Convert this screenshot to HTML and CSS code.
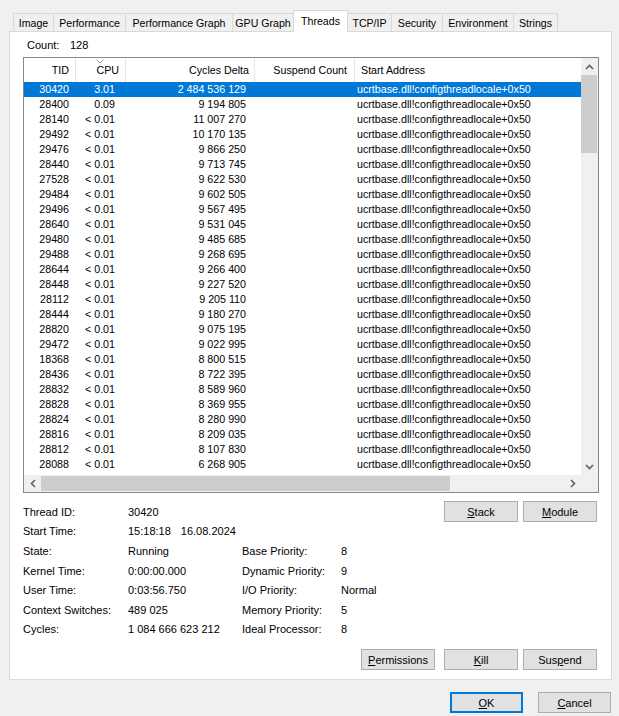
FILE: index.html
```html
<!DOCTYPE html>
<html>
<head>
<meta charset="utf-8">
<link rel="stylesheet" href="styles.css">
</head>
<body>
<div class="window">
  <div class="tabs">
    <div class="tab w-image">Image</div>
    <div class="tab w-perf">Performance</div>
    <div class="tab w-pgraph">Performance Graph</div>
    <div class="tab w-gpu">GPU Graph</div>
    <div class="tab active w-threads">Threads</div>
    <div class="tab w-tcp">TCP/IP</div>
    <div class="tab w-sec">Security</div>
    <div class="tab w-env">Environment</div>
    <div class="tab w-str">Strings</div>
  </div>
  <div class="panel">
    <div class="count"><span class="count-label">Count:</span><span>128</span></div>
    <div class="list">
      <div class="list-main">
        <div class="viewport">
          <div class="hdr">
            <div class="hc">TID</div>
            <div class="hc hc-cpu">CPU<svg class="sort" width="8" height="5" viewBox="0 0 8 5"><polyline points="0.5,0.5 4,4 7.5,0.5" fill="none" stroke="#9a9a9a" stroke-width="1"/></svg></div>
            <div class="hc hc-cyc">Cycles Delta</div>
            <div class="hc hc-sus">Suspend Count</div>
            <div class="hc hc-addr">Start Address</div>
          </div>
          <div class="row sel"><span class="c-tid">30420</span><span class="c-cpu">3.01</span><span class="c-cyc">2 484 536 129</span><span></span><span class="c-addr">ucrtbase.dll!configthreadlocale+0x50</span></div>
          <div class="row"><span class="c-tid">28400</span><span class="c-cpu">0.09</span><span class="c-cyc">9 194 805</span><span></span><span class="c-addr">ucrtbase.dll!configthreadlocale+0x50</span></div>
          <div class="row"><span class="c-tid">28140</span><span class="c-cpu">&lt; 0.01</span><span class="c-cyc">11 007 270</span><span></span><span class="c-addr">ucrtbase.dll!configthreadlocale+0x50</span></div>
          <div class="row"><span class="c-tid">29492</span><span class="c-cpu">&lt; 0.01</span><span class="c-cyc">10 170 135</span><span></span><span class="c-addr">ucrtbase.dll!configthreadlocale+0x50</span></div>
          <div class="row"><span class="c-tid">29476</span><span class="c-cpu">&lt; 0.01</span><span class="c-cyc">9 866 250</span><span></span><span class="c-addr">ucrtbase.dll!configthreadlocale+0x50</span></div>
          <div class="row"><span class="c-tid">28440</span><span class="c-cpu">&lt; 0.01</span><span class="c-cyc">9 713 745</span><span></span><span class="c-addr">ucrtbase.dll!configthreadlocale+0x50</span></div>
          <div class="row"><span class="c-tid">27528</span><span class="c-cpu">&lt; 0.01</span><span class="c-cyc">9 622 530</span><span></span><span class="c-addr">ucrtbase.dll!configthreadlocale+0x50</span></div>
          <div class="row"><span class="c-tid">29484</span><span class="c-cpu">&lt; 0.01</span><span class="c-cyc">9 602 505</span><span></span><span class="c-addr">ucrtbase.dll!configthreadlocale+0x50</span></div>
          <div class="row"><span class="c-tid">29496</span><span class="c-cpu">&lt; 0.01</span><span class="c-cyc">9 567 495</span><span></span><span class="c-addr">ucrtbase.dll!configthreadlocale+0x50</span></div>
          <div class="row"><span class="c-tid">28640</span><span class="c-cpu">&lt; 0.01</span><span class="c-cyc">9 531 045</span><span></span><span class="c-addr">ucrtbase.dll!configthreadlocale+0x50</span></div>
          <div class="row"><span class="c-tid">29480</span><span class="c-cpu">&lt; 0.01</span><span class="c-cyc">9 485 685</span><span></span><span class="c-addr">ucrtbase.dll!configthreadlocale+0x50</span></div>
          <div class="row"><span class="c-tid">29488</span><span class="c-cpu">&lt; 0.01</span><span class="c-cyc">9 268 695</span><span></span><span class="c-addr">ucrtbase.dll!configthreadlocale+0x50</span></div>
          <div class="row"><span class="c-tid">28644</span><span class="c-cpu">&lt; 0.01</span><span class="c-cyc">9 266 400</span><span></span><span class="c-addr">ucrtbase.dll!configthreadlocale+0x50</span></div>
          <div class="row"><span class="c-tid">28448</span><span class="c-cpu">&lt; 0.01</span><span class="c-cyc">9 227 520</span><span></span><span class="c-addr">ucrtbase.dll!configthreadlocale+0x50</span></div>
          <div class="row"><span class="c-tid">28112</span><span class="c-cpu">&lt; 0.01</span><span class="c-cyc">9 205 110</span><span></span><span class="c-addr">ucrtbase.dll!configthreadlocale+0x50</span></div>
          <div class="row"><span class="c-tid">28444</span><span class="c-cpu">&lt; 0.01</span><span class="c-cyc">9 180 270</span><span></span><span class="c-addr">ucrtbase.dll!configthreadlocale+0x50</span></div>
          <div class="row"><span class="c-tid">28820</span><span class="c-cpu">&lt; 0.01</span><span class="c-cyc">9 075 195</span><span></span><span class="c-addr">ucrtbase.dll!configthreadlocale+0x50</span></div>
          <div class="row"><span class="c-tid">29472</span><span class="c-cpu">&lt; 0.01</span><span class="c-cyc">9 022 995</span><span></span><span class="c-addr">ucrtbase.dll!configthreadlocale+0x50</span></div>
          <div class="row"><span class="c-tid">18368</span><span class="c-cpu">&lt; 0.01</span><span class="c-cyc">8 800 515</span><span></span><span class="c-addr">ucrtbase.dll!configthreadlocale+0x50</span></div>
          <div class="row"><span class="c-tid">28436</span><span class="c-cpu">&lt; 0.01</span><span class="c-cyc">8 722 395</span><span></span><span class="c-addr">ucrtbase.dll!configthreadlocale+0x50</span></div>
          <div class="row"><span class="c-tid">28832</span><span class="c-cpu">&lt; 0.01</span><span class="c-cyc">8 589 960</span><span></span><span class="c-addr">ucrtbase.dll!configthreadlocale+0x50</span></div>
          <div class="row"><span class="c-tid">28828</span><span class="c-cpu">&lt; 0.01</span><span class="c-cyc">8 369 955</span><span></span><span class="c-addr">ucrtbase.dll!configthreadlocale+0x50</span></div>
          <div class="row"><span class="c-tid">28824</span><span class="c-cpu">&lt; 0.01</span><span class="c-cyc">8 280 990</span><span></span><span class="c-addr">ucrtbase.dll!configthreadlocale+0x50</span></div>
          <div class="row"><span class="c-tid">28816</span><span class="c-cpu">&lt; 0.01</span><span class="c-cyc">8 209 035</span><span></span><span class="c-addr">ucrtbase.dll!configthreadlocale+0x50</span></div>
          <div class="row"><span class="c-tid">28812</span><span class="c-cpu">&lt; 0.01</span><span class="c-cyc">8 107 830</span><span></span><span class="c-addr">ucrtbase.dll!configthreadlocale+0x50</span></div>
          <div class="row"><span class="c-tid">28088</span><span class="c-cpu">&lt; 0.01</span><span class="c-cyc">6 268 905</span><span></span><span class="c-addr">ucrtbase.dll!configthreadlocale+0x50</span></div>
          <div class="row"><span class="c-tid">28040</span><span class="c-cpu">&lt; 0.01</span><span class="c-cyc">4 781 125</span><span></span><span class="c-addr">ucrtbase.dll!configthreadlocale+0x50</span></div>
        </div>
        <div class="vscroll">
          <div class="arrow"><svg width="9" height="6" viewBox="0 0 9 6"><polyline points="1,5 4.5,1.5 8,5" fill="none" stroke="#606060" stroke-width="1.6"/></svg></div>
          <div class="vthumb"></div>
          <div class="vtrack"></div>
          <div class="arrow"><svg width="9" height="6" viewBox="0 0 9 6"><polyline points="1,1 4.5,4.5 8,1" fill="none" stroke="#606060" stroke-width="1.6"/></svg></div>
        </div>
      </div>
      <div class="list-bottom">
        <div class="hscroll">
          <div class="arrow"><svg width="6" height="9" viewBox="0 0 6 9"><polyline points="5,1 1.5,4.5 5,8" fill="none" stroke="#606060" stroke-width="1.6"/></svg></div>
          <div class="hthumb"></div>
          <div class="htrack"></div>
          <div class="arrow"><svg width="6" height="9" viewBox="0 0 6 9"><polyline points="1,1 4.5,4.5 1,8" fill="none" stroke="#606060" stroke-width="1.6"/></svg></div>
        </div>
        <div class="corner"></div>
      </div>
    </div>
    <div class="details">
      <div>Thread ID:</div><div>30420</div>
      <div class="top-buttons"><button class="btn"><u>S</u>tack</button><button class="btn"><u>M</u>odule</button></div>
      <div>Start Time:</div><div class="span3">15:18:18<span class="date">16.08.2024</span></div>
      <div>State:</div><div>Running</div><div>Base Priority:</div><div>8</div>
      <div>Kernel Time:</div><div>0:00:00.000</div><div>Dynamic Priority:</div><div>9</div>
      <div>User Time:</div><div>0:03:56.750</div><div>I/O Priority:</div><div>Normal</div>
      <div>Context Switches:</div><div>489 025</div><div>Memory Priority:</div><div>5</div>
      <div>Cycles:</div><div>1 084 666 623 212</div><div>Ideal Processor:</div><div>8</div>
    </div>
    <div class="bottom-buttons">
      <button class="btn btn-perm"><u>P</u>ermissions</button>
      <button class="btn"><u>K</u>ill</button>
      <button class="btn">Sus<u>p</u>end</button>
    </div>
  </div>
  <div class="footer">
    <button class="btn fbtn default"><u>O</u>K</button>
    <button class="btn fbtn"><u>C</u>ancel</button>
  </div>
</div>
</body>
</html>
```
FILE: styles.css
```css
* { box-sizing: border-box; }
html, body { margin: 0; padding: 0; }
body {
  background: #f0f0f0;
  font-family: "Liberation Sans", Arial, sans-serif;
  font-size: 11px;
  color: #000;
}
.window { width: 619px; height: 716px; }

.tabs {
  display: flex;
  align-items: flex-end;
  height: 31px;
  padding-top: 11px;
  padding-left: 13px;
  font-size: 10.6px;
}
.tab {
  height: 18px;
  line-height: 18px;
  text-align: center;
  border: 1px solid #d9d9d9;
  border-bottom: none;
  margin-right: -1px;
  background: #f0f0f0;
  white-space: nowrap;
}
.tab.active {
  position: relative;
  z-index: 1;
  height: 22px;
  line-height: 20px;
  margin-bottom: -1px;
  background: #fff;
}
.w-image { width: 41px; }
.w-perf { width: 73px; }
.w-pgraph { width: 108px; }
.w-gpu { width: 62px; }
.w-threads { width: 55px; }
.w-tcp { width: 45px; }
.w-sec { width: 52px; }
.w-env { width: 72px; }
.w-str { width: 45px; }

.panel {
  margin-left: 9px;
  width: 603px;
  height: 649px;
  background: #fff;
  border: 1px solid #d9d9d9;
  padding: 6px 14px 0 13px;
}
.count { height: 14px; line-height: 14px; padding-left: 4px; }
.count-label { display: inline-block; width: 43px; }

.list {
  margin-top: 5px;
  width: 576px;
  height: 436px;
  border: 1px solid #828790;
  display: flex;
  flex-direction: column;
  font-size: 10.7px;
}
.list-main { flex: 1; display: flex; min-height: 0; }
.viewport { flex: 1; overflow: hidden; }
.hdr {
  display: grid;
  grid-template-columns: 52px 50px 129px 100px 1fr;
  height: 24px;
  line-height: 24px;
}
.hc {
  text-align: right;
  padding-right: 6px;
  border-right: 1px solid #e5e5e5;
  white-space: nowrap;
}
.hc-cpu { position: relative; }
.sort { position: absolute; left: 20px; top: 1px; }
.hc-cyc { padding-right: 5px; }
.hc-sus { padding-right: 7px; }
.hc-addr { text-align: left; padding-left: 6px; border-right: none; }

.row {
  display: grid;
  grid-template-columns: 52px 50px 129px 100px 1fr;
  height: 15px;
  line-height: 15px;
  white-space: nowrap;
}
.row.sel { background: #0078d7; color: #fff; }
.c-tid { text-align: right; padding-right: 7px; }
.c-cpu { text-align: right; padding-right: 11px; }
.c-cyc { text-align: right; padding-right: 9px; }
.c-addr { padding-left: 2px; }

.vscroll {
  width: 17px;
  background: #f0f0f0;
  display: flex;
  flex-direction: column;
}
.arrow {
  width: 17px;
  height: 17px;
  display: flex;
  align-items: center;
  justify-content: center;
  flex: none;
}
.vthumb { height: 78px; margin: 0 1px 0 0; background: #cdcdcd; flex: none; }
.vtrack { flex: 1; }
.list-bottom { height: 17px; display: flex; }
.hscroll { flex: 1; display: flex; background: #f0f0f0; }
.hthumb { width: 409px; margin: 1px 0; background: #cdcdcd; flex: none; }
.htrack { flex: 1; }
.corner { width: 17px; background: #f0f0f0; }

.details {
  margin-top: 9px;
  display: grid;
  grid-template-columns: 105px 114px 99px 1fr;
  grid-auto-rows: 19.6px;
  align-items: center;
  white-space: nowrap;
}
.top-buttons {
  grid-column: 3 / 5;
  display: flex;
  justify-content: flex-end;
  gap: 5px;
}
.span3 { grid-column: 2 / 5; }
.date { margin-left: 10px; }

.btn {
  width: 74px;
  height: 21px;
  padding: 0;
  background: #e1e1e1;
  border: 1px solid #adadad;
  font-family: "Liberation Sans", Arial, sans-serif;
  font-size: 11px;
  color: #000;
}
.bottom-buttons {
  margin-top: 10px;
  display: flex;
  justify-content: flex-end;
  gap: 5px;
}
.btn-perm { margin-right: 4px; }

.footer {
  display: flex;
  justify-content: flex-end;
  gap: 15px;
  padding: 12px 8px 0 0;
}
.fbtn { width: 73px; }
.fbtn.default { border: 2px solid #0078d7; }
```
